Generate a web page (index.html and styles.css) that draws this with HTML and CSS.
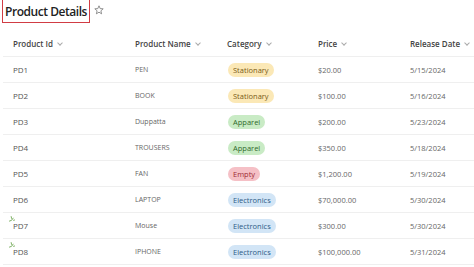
FILE: index.html
```html
<!DOCTYPE html>
<html>
<head>
<meta charset="utf-8" />
<title>Product Details</title>
<link rel="stylesheet" href="styles.css">
</head>
<body>
<div class="page">
  <div class="title-bar">
    <span class="title">Product Details</span>
    <svg class="star" width="10" height="10" viewBox="0 0 10 10"><path d="M5 0.8 L6.2 3.6 L9.2 3.8 L6.9 5.8 L7.6 8.8 L5 7.2 L2.4 8.8 L3.1 5.8 L0.8 3.8 L3.8 3.6 Z" fill="none" stroke="#777" stroke-width="0.8" stroke-linejoin="round"/></svg>
  </div>

  <div class="list">
    <div class="row head">
      <div class="cell">Product Id <i class="chev"></i></div>
      <div class="cell">Product Name <i class="chev"></i></div>
      <div class="cell">Category <i class="chev"></i></div>
      <div class="cell">Price <i class="chev"></i></div>
      <div class="cell">Release Date <i class="chev"></i></div>
    </div>
    <div class="row">
      <div class="cell id">PD1</div>
      <div class="cell name">PEN</div>
      <div class="cell"><span class="pill yellow">Stationary</span></div>
      <div class="cell">$20.00</div>
      <div class="cell">5/15/2024</div>
    </div>
    <div class="row">
      <div class="cell id">PD2</div>
      <div class="cell name">BOOK</div>
      <div class="cell"><span class="pill yellow">Stationary</span></div>
      <div class="cell">$100.00</div>
      <div class="cell">5/16/2024</div>
    </div>
    <div class="row">
      <div class="cell id">PD3</div>
      <div class="cell name">Duppatta</div>
      <div class="cell"><span class="pill green">Apparel</span></div>
      <div class="cell">$200.00</div>
      <div class="cell">5/23/2024</div>
    </div>
    <div class="row">
      <div class="cell id">PD4</div>
      <div class="cell name">TROUSERS</div>
      <div class="cell"><span class="pill green">Apparel</span></div>
      <div class="cell">$350.00</div>
      <div class="cell">5/18/2024</div>
    </div>
    <div class="row">
      <div class="cell id">PD5</div>
      <div class="cell name">FAN</div>
      <div class="cell"><span class="pill red">Empty</span></div>
      <div class="cell">$1,200.00</div>
      <div class="cell">5/19/2024</div>
    </div>
    <div class="row">
      <div class="cell id">PD6</div>
      <div class="cell name">LAPTOP</div>
      <div class="cell"><span class="pill blue">Electronics</span></div>
      <div class="cell">$70,000.00</div>
      <div class="cell">5/30/2024</div>
    </div>
    <div class="row">
      <div class="cell id"><svg class="new" width="6" height="6" viewBox="0 0 6 6"><path d="M0.5 5.2 Q3 5 4.2 2.2 M2.2 0.6 L2.6 2.4 M4.6 4.3 L5.6 4.0" fill="none" stroke="#5c9c3c" stroke-width="0.8" stroke-linecap="round"/></svg>PD7</div>
      <div class="cell name">Mouse</div>
      <div class="cell"><span class="pill blue">Electronics</span></div>
      <div class="cell">$300.00</div>
      <div class="cell">5/30/2024</div>
    </div>
    <div class="row">
      <div class="cell id"><svg class="new" width="6" height="6" viewBox="0 0 6 6"><path d="M0.5 5.2 Q3 5 4.2 2.2 M2.2 0.6 L2.6 2.4 M4.6 4.3 L5.6 4.0" fill="none" stroke="#5c9c3c" stroke-width="0.8" stroke-linecap="round"/></svg>PD8</div>
      <div class="cell name">IPHONE</div>
      <div class="cell"><span class="pill blue">Electronics</span></div>
      <div class="cell">$100,000.00</div>
      <div class="cell">5/31/2024</div>
    </div>
  </div>
</div>
</body>
</html>
```

FILE: styles.css
```css
body{
margin:0;
background:#fff;
font-family:"Open Sans","Noto Sans",sans-serif;
color:#555;
}
.page{
width:474px;
height:267px;
overflow:hidden;
}
.title-bar{
display:flex;
align-items:flex-start;
height:31px;
}
.title{
display:inline-block;
margin-left:2px;
margin-top:-1px;
padding:4px 2px 2px 2px;
border:1px solid #d13c44;
font-size:12px;
font-weight:600;
letter-spacing:-0.45px;
color:#222;
line-height:16px;
}
.star{
margin-left:4px;
margin-top:5px;
}
.list{
margin-left:3px;
}
.row{
display:grid;
grid-template-columns:122px 92px 91px 92px 1fr;
height:26px;
align-items:center;
border-bottom:1px solid #efefef;
box-sizing:border-box;
padding-left:10px;
font-size:7.5px;
color:#666;
}
.row.head{
font-size:8px;
font-weight:600;
color:#444;
}
.cell{
white-space:nowrap;
display:flex;
align-items:center;
}
.id{
position:relative;
color:#555;
font-size:8px;
}
.name{
color:#666;
font-size:7px;
}
.chev{
display:inline-block;
width:3px;
height:3px;
margin-left:5px;
margin-top:-2px;
border-right:1px solid #aaa;
border-bottom:1px solid #aaa;
transform:rotate(45deg);
}
.pill{
display:inline-block;
margin-left:1px;
padding:0 5px;
height:14px;
line-height:14px;
border-radius:7px;
font-size:7.5px;
}
.yellow{ background:#fbe8b6; color:#7a5b17; }
.green{ background:#c9ebc5; color:#2f6a2b; }
.red{ background:#f5c0c6; color:#9e2b35; }
.blue{ background:#d2e5f6; color:#2d5b87; }
.new{
position:absolute;
left:-4px;
top:-4px;
}
```
